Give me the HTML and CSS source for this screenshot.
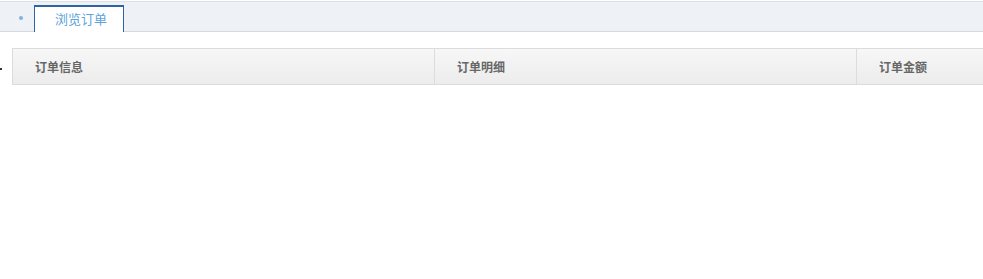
FILE: index.html
```html
<!DOCTYPE html>
<html lang="zh-CN">
<head>
    <meta charset="UTF-8">
    <title>浏览订单</title>
    <link rel="stylesheet" href="styles.css">
</head>
<body>
    <div class="tab-bar">
        <span class="tab-dot"></span>
        <a href="#" class="tab active">浏览订单</a>
    </div>

    <div class="content">
        <span class="side-dot"></span>
        <div class="order-table">
            <div class="order-head">
                <div>订单信息</div>
                <div>订单明细</div>
                <div>订单金额</div>
            </div>
        </div>
    </div>
</body>
</html>
```

FILE: styles.css
```css
* {
    margin: 0;
    padding: 0;
    box-sizing: border-box;
}

body {
    background: #fff;
    font-family: "Microsoft YaHei", "Noto Sans CJK SC", sans-serif;
    font-size: 12px;
    color: #666;
    overflow: hidden;
}

.tab-bar {
    margin-top: 1px;
    height: 31px;
    background: #eef1f6;
    border-top: 1px solid #dcdfe3;
    border-bottom: 1px solid #d5d8dc;
    display: flex;
    align-items: flex-end;
    padding-left: 19px;
}

.tab-dot {
    flex: none;
    width: 4px;
    height: 4px;
    border-radius: 50%;
    background: #7fb2df;
    align-self: center;
    margin: 2px 11px 0 0;
}

.tab {
    width: 90px;
    height: 27px;
    margin-bottom: -1px;
    background: #fff;
    border: 1px solid #2c64a4;
    border-top-width: 2px;
    border-bottom: none;
    color: #5da3dc;
    text-decoration: none;
    font-size: 13px;
    display: flex;
    align-items: center;
    justify-content: center;
    padding: 0 0 2px 4px;
}

.content {
    display: flex;
    align-items: flex-start;
    padding-top: 16px;
}

.side-dot {
    flex: none;
    width: 2px;
    height: 2px;
    background: #333;
    margin: 20px 10px 0 0;
}

.order-table {
    flex: none;
    width: 980px;
    border: 1px solid #dcdcdc;
    border-right: none;
}

.order-head {
    display: grid;
    grid-template-columns: 421px 422px 1fr;
    height: 35px;
    background: linear-gradient(#f7f7f7, #ececec);
    font-weight: bold;
}

.order-head > div {
    display: flex;
    align-items: center;
    padding-left: 22px;
    border-left: 1px solid #dcdcdc;
}

.order-head > div:first-child {
    border-left: none;
}
```
